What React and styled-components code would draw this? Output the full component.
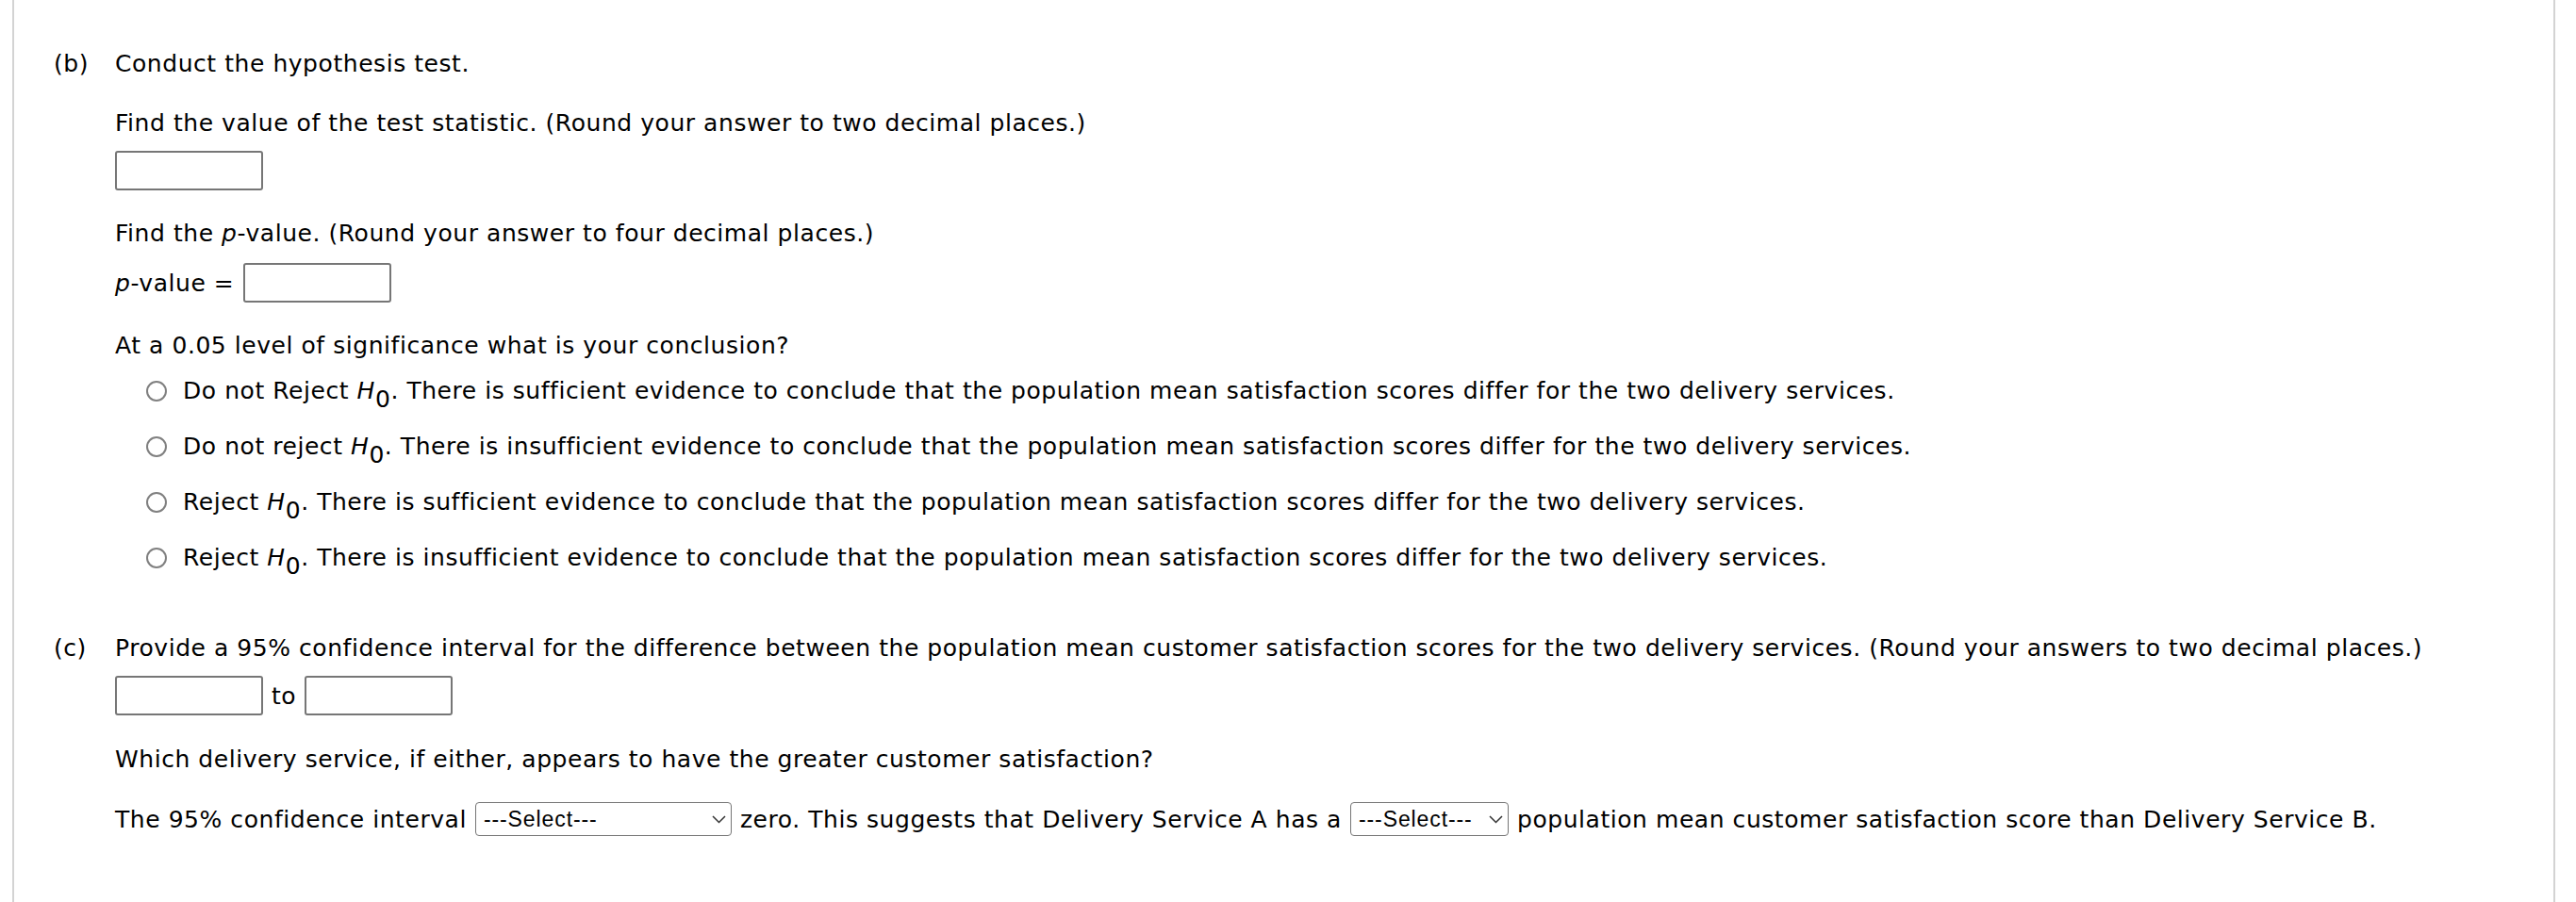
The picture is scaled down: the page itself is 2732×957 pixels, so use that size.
import styled, { createGlobalStyle } from "styled-components";

const GlobalStyle = createGlobalStyle`
  html, body {
    margin: 0;
    padding: 0;
    background: #fff;
  }
  body {
    font-family: "DejaVu Sans", Verdana, sans-serif;
    font-size: 25px;
    letter-spacing: 0.55px;
    color: #000;
  }
`;

const Frame = styled.div`
  margin-left: 13px;
  width: 2697px;
  min-height: 957px;
  box-sizing: border-box;
  border-left: 2px solid #d3d3d3;
  border-right: 2px solid #d3d3d3;
  padding-top: 53px;
`;

const Part = styled.section`
  display: grid;
  grid-template-columns: 107px 1fr;
  margin-top: ${(p) => p.$mt || 0}px;
`;

const PartLabel = styled.div`
  padding-left: 42px;
  line-height: 29px;
`;

const Body = styled.div`
  display: flex;
  flex-direction: column;
`;

const Line = styled.div`
  line-height: 29px;
  margin-top: ${(p) => p.$mt || 0}px;
  white-space: nowrap;
`;

const Row = styled.div`
  display: flex;
  align-items: center;
  gap: ${(p) => p.$gap || 9}px;
  margin-top: ${(p) => p.$mt || 0}px;
  white-space: nowrap;
  line-height: 29px;
`;

const Box = styled.span`
  display: inline-block;
  width: 157px;
  height: 42px;
  box-sizing: border-box;
  border: 2px solid #767676;
  border-radius: 3px;
  background: #fff;
  flex: none;
`;

const Options = styled.div`
  display: flex;
  flex-direction: column;
  gap: 30px;
  margin-top: 19px;
  padding-left: 33px;
`;

const Option = styled.label`
  display: flex;
  align-items: center;
  gap: 17px;
  line-height: 29px;
  white-space: nowrap;
`;

const Radio = styled.span`
  display: inline-block;
  width: 22px;
  height: 22px;
  box-sizing: border-box;
  border: 2px solid #808080;
  border-radius: 50%;
  flex: none;
`;

const Var = styled.i`
  font-style: italic;
`;

const Sub = styled.sub`
  font-size: 25px;
  vertical-align: -9px;
  line-height: 0;
  font-style: normal;
`;

const SelectWrap = styled.span`
  position: relative;
  display: inline-block;
  width: ${(p) => p.$w}px;
  height: 36px;
  flex: none;
`;

const Select = styled.select`
  appearance: none;
  width: 100%;
  height: 100%;
  box-sizing: border-box;
  border: 1.5px solid #767676;
  border-radius: 4px;
  background: #fff;
  padding: 0 0 0 8px;
  font-family: "Liberation Sans", Arial, sans-serif;
  font-size: 23px;
  letter-spacing: 0.9px;
  color: #000;
`;

const Chevron = styled.svg`
  position: absolute;
  right: 6px;
  top: 14px;
  pointer-events: none;
`;

function H0() {
  return (
    <>
      <Var>H</Var>
      <Sub>0</Sub>
    </>
  );
}

function Dropdown({ width }) {
  return (
    <SelectWrap $w={width}>
      <Select defaultValue="">
        <option value="">---Select---</option>
      </Select>
      <Chevron width="15" height="9" viewBox="0 0 15 9">
        <path d="M1 1 L7.5 7.5 L14 1" fill="none" stroke="#333" strokeWidth="1.5" />
      </Chevron>
    </SelectWrap>
  );
}

const conclusions = [
  ["Do not Reject", "There is sufficient evidence"],
  ["Do not reject", "There is insufficient evidence"],
  ["Reject", "There is sufficient evidence"],
  ["Reject", "There is insufficient evidence"],
];

export default function App() {
  return (
    <>
      <GlobalStyle />
      <Frame>
        <Part>
          <PartLabel>(b)</PartLabel>
          <Body>
            <Line>Conduct the hypothesis test.</Line>
            <Line $mt={34}>
              Find the value of the test statistic. (Round your answer to two
              decimal places.)
            </Line>
            <Row $mt={15}>
              <Box />
            </Row>
            <Line $mt={31}>
              Find the <Var>p</Var>-value. (Round your answer to four decimal
              places.)
            </Line>
            <Row $mt={17} $gap={10}>
              <span>
                <Var>p</Var>-value =
              </span>
              <Box />
            </Row>
            <Line $mt={31}>
              At a 0.05 level of significance what is your conclusion?
            </Line>
            <Options>
              {conclusions.map(([verb, evidence], i) => (
                <Option key={i}>
                  <Radio />
                  <span>
                    {verb} <H0 />. {evidence} to conclude that the population
                    mean satisfaction scores differ for the two delivery
                    services.
                  </span>
                </Option>
              ))}
            </Options>
          </Body>
        </Part>
        <Part $mt={67}>
          <PartLabel>(c)</PartLabel>
          <Body>
            <Line>
              Provide a 95% confidence interval for the difference between the
              population mean customer satisfaction scores for the two delivery
              services. (Round your answers to two decimal places.)
            </Line>
            <Row $mt={15} $gap={9}>
              <Box />
              <span>to</span>
              <Box />
            </Row>
            <Line $mt={32}>
              Which delivery service, if either, appears to have the greater
              customer satisfaction?
            </Line>
            <Row $mt={31} $gap={9}>
              <span>The 95% confidence interval</span>
              <Dropdown width={272} />
              <span>
                zero. This suggests that Delivery Service A has a
              </span>
              <Dropdown width={168} />
              <span>
                population mean customer satisfaction score than Delivery
                Service B.
              </span>
            </Row>
          </Body>
        </Part>
      </Frame>
    </>
  );
}
